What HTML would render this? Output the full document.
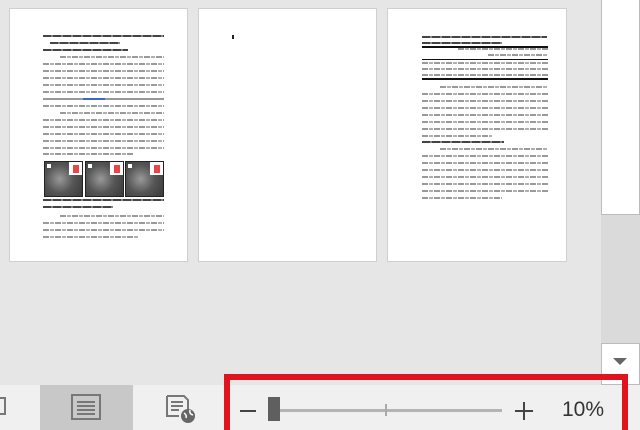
<!DOCTYPE html>
<html style="height:430px;overflow:hidden"><head><style>
body{margin:0;width:640px;height:430px;background:#e6e6e6;position:relative;overflow:hidden;font-family:"Liberation Sans",sans-serif}
.pg{position:absolute;background:#fff;border:1px solid #cfcfcf;box-sizing:border-box}
.l{position:absolute;height:2px;background:repeating-linear-gradient(90deg,#9a9a9a 0 6px,#fff 6px 7px,#b0b0b0 7px 11px,#fff 11px 12px)}
.b{background:repeating-linear-gradient(90deg,#444 0 8px,#888 8px 10px)}
.img{position:absolute;background:radial-gradient(circle at 40% 50%,#999,#555 50%,#3a3a3a);border:1px solid #222}
.img i{position:absolute;right:0;top:0;width:13px;height:13px;background:#fff}
.img i:after{content:"";position:absolute;left:4px;bottom:2px;width:6px;height:8px;background:#e44}
.img b{position:absolute;left:2px;top:2px;width:4px;height:4px;background:#fff}
</style></head><body>
<div class="pg" style="left:9px;top:8px;width:179px;height:254px">
<div class="l b" style="left:33px;top:26px;width:121px"></div>
<div class="l b" style="left:40px;top:33px;width:70px"></div>
<div class="l b" style="left:33px;top:40px;width:85px"></div>
<div class="l" style="left:50px;top:47px;width:104px"></div>
<div class="l" style="left:33px;top:54px;width:121px"></div>
<div class="l" style="left:33px;top:61px;width:121px"></div>
<div class="l" style="left:33px;top:68px;width:121px"></div>
<div class="l" style="left:33px;top:75px;width:121px"></div>
<div class="l" style="left:33px;top:82px;width:121px"></div>
<div class="l" style="left:33px;top:89px;width:121px;background:linear-gradient(90deg,#999 0 40px,#3a6bc0 40px 62px,#999 62px)"></div>
<div class="l" style="left:33px;top:96px;width:121px"></div>
<div class="l" style="left:50px;top:103px;width:104px"></div>
<div class="l" style="left:33px;top:110px;width:121px"></div>
<div class="l" style="left:33px;top:117px;width:121px"></div>
<div class="l" style="left:33px;top:124px;width:121px"></div>
<div class="l" style="left:33px;top:131px;width:121px"></div>
<div class="l" style="left:33px;top:138px;width:121px"></div>
<div class="l" style="left:33px;top:144px;width:90px"></div>
<div class="img" style="left:34px;top:152px;width:37px;height:34px"><i></i><b></b></div>
<div class="img" style="left:75px;top:152px;width:37px;height:34px"><i></i><b></b></div>
<div class="img" style="left:115px;top:152px;width:37px;height:34px"><i></i><b></b></div>
<div class="l b" style="left:33px;top:190px;width:121px"></div>
<div class="l b" style="left:33px;top:197px;width:70px"></div>
<div class="l" style="left:50px;top:206px;width:104px"></div>
<div class="l" style="left:33px;top:213px;width:121px"></div>
<div class="l" style="left:33px;top:220px;width:121px"></div>
<div class="l" style="left:33px;top:227px;width:96px"></div>
</div>
<div class="pg" style="left:198px;top:8px;width:179px;height:254px">
<div style="position:absolute;left:33px;top:26px;width:2px;height:4px;background:#222"></div></div>
<div class="pg" style="left:387px;top:8px;width:180px;height:254px">
<div class="l b" style="left:34px;top:27px;width:125px"></div>
<div class="l b" style="left:34px;top:33px;width:80px"></div>
<div style="position:absolute;left:34px;top:37px;width:126px;height:2px;background:#111"></div>
<div class="l" style="left:70px;top:39px;width:90px"></div>
<div class="l" style="left:100px;top:45px;width:60px"></div>
<div style="position:absolute;left:34px;top:50px;width:126px;height:1px;background:#111"></div>
<div class="l" style="left:34px;top:53px;width:126px"></div>
<div class="l" style="left:34px;top:59px;width:126px"></div>
<div class="l" style="left:34px;top:65px;width:126px"></div>
<div style="position:absolute;left:34px;top:69px;width:126px;height:2px;background:#111"></div>
<div class="l" style="left:52px;top:77px;width:108px"></div>
<div class="l" style="left:34px;top:84px;width:126px"></div>
<div class="l" style="left:34px;top:91px;width:126px"></div>
<div class="l" style="left:34px;top:98px;width:126px"></div>
<div class="l" style="left:34px;top:105px;width:126px"></div>
<div class="l" style="left:34px;top:112px;width:126px"></div>
<div class="l" style="left:34px;top:119px;width:126px"></div>
<div class="l" style="left:34px;top:126px;width:70px"></div>
<div class="l b" style="left:34px;top:132px;width:82px"></div>
<div class="l" style="left:52px;top:139px;width:108px"></div>
<div class="l" style="left:34px;top:146px;width:126px"></div>
<div class="l" style="left:34px;top:153px;width:126px"></div>
<div class="l" style="left:34px;top:160px;width:126px"></div>
<div class="l" style="left:34px;top:167px;width:126px"></div>
<div class="l" style="left:34px;top:174px;width:126px"></div>
<div class="l" style="left:34px;top:181px;width:126px"></div>
<div class="l" style="left:34px;top:188px;width:80px"></div>
</div>
<div style="position:absolute;left:601px;top:0;width:39px;height:385px;background:#dadada"></div>
<div style="position:absolute;left:601px;top:-1px;width:39px;height:216px;background:#fff;border:1px solid #bbb;box-sizing:border-box"></div>
<div style="position:absolute;left:601px;top:343px;width:39px;height:42px;background:#fff;border:1px solid #bbb;box-sizing:border-box"></div>
<div style="position:absolute;left:613px;top:358px;border-left:7px solid transparent;border-right:7px solid transparent;border-top:7px solid #666"></div>
<div style="position:absolute;left:0;top:385px;width:640px;height:45px;background:#f0f0f0"></div>
<div style="position:absolute;left:-6px;top:397px;width:12px;height:18px;border:2px solid #777;box-sizing:border-box"></div>
<div style="position:absolute;left:40px;top:385px;width:93px;height:45px;background:#c8c8c8"></div>
<svg style="position:absolute;left:70px;top:393px" width="32" height="32"><rect x="2" y="2" width="28" height="24" fill="none" stroke="#777" stroke-width="2"/><path d="M7 9h18M7 13h18M7 17h18M7 21h18" stroke="#777" stroke-width="2"/></svg>
<svg style="position:absolute;left:164px;top:393px" width="36" height="32"><path d="M3 3h17l4 4v11" fill="none" stroke="#777" stroke-width="2"/><path d="M3 3v20h12" fill="none" stroke="#777" stroke-width="2"/><path d="M7 9h12M7 13h12M7 17h8" stroke="#777" stroke-width="2"/><circle cx="24" cy="23" r="7" fill="#666"/><path d="M20 20q3 2 2 5M26 17q-1 4 3 5" stroke="#fff" stroke-width="1.5" fill="none"/></svg>
<div style="position:absolute;left:224px;top:374px;width:404px;height:70px;border:6px solid #e0141e;box-sizing:border-box"></div>
<div style="position:absolute;left:240px;top:410px;width:16px;height:2px;background:#444"></div>
<div style="position:absolute;left:280px;top:409px;width:222px;height:3px;background:#b4b4b4"></div>
<div style="position:absolute;left:385px;top:404px;width:2px;height:12px;background:#aaa"></div>
<div style="position:absolute;left:268px;top:397px;width:12px;height:24px;background:#5f5f5f"></div>
<div style="position:absolute;left:515px;top:410px;width:18px;height:2px;background:#444"></div>
<div style="position:absolute;left:523px;top:402px;width:2px;height:18px;background:#444"></div>
<div style="position:absolute;left:562px;top:398px;font-size:21px;color:#333">10%</div>
</body></html>
